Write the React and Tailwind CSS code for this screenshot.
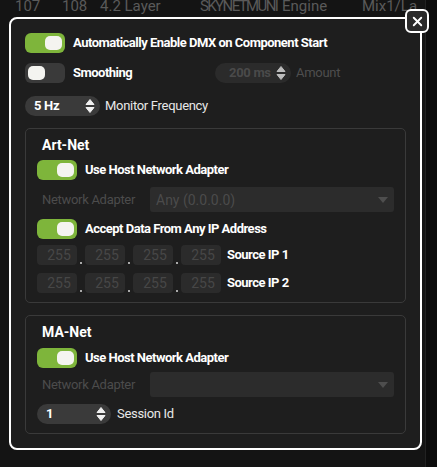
import { X } from 'lucide-react';

const Toggle = ({ on }) => (
    <div className={on ? 'w-[40px] h-[20px] rounded-[6px] bg-[#7eb53b] flex items-center justify-end px-[3px] shrink-0' : 'w-[40px] h-[20px] rounded-[6px] bg-[#3a3a3a] flex items-center justify-start px-[3px] shrink-0'}>
        <div className="w-[17px] h-[14px] rounded-[5px] bg-[#f4f4f0]" />
    </div>
);

const Arrows = ({ color }) => (
    <svg width="10" height="16" viewBox="0 0 10 16" className="shrink-0">
        <path d="M5 1.5 L9 6.5 H1 Z" fill={color} stroke={color} strokeWidth="1" strokeLinejoin="round" />
        <path d="M5 14.5 L9 9.5 H1 Z" fill={color} stroke={color} strokeWidth="1" strokeLinejoin="round" />
    </svg>
);

const Spinner = ({ value, width, disabled }) => (
    <div
        className={disabled ? 'h-[20px] rounded-full bg-[#2b2b2b] flex items-center justify-between pl-[14px] pr-[5px] shrink-0' : 'h-[20px] rounded-full bg-[#3a3a3a] flex items-center justify-between pl-[9px] pr-[5px] shrink-0'}
        style={{ width }}
    >
        <span className={disabled ? 'text-[13px] leading-[16px] font-bold text-[#4a4a4a] tracking-[-0.3px]' : 'text-[13px] leading-[16px] font-bold text-white tracking-[-0.3px]'}>{value}</span>
        <Arrows color={disabled ? '#bdbdbd' : '#f0f0f0'} />
    </div>
);

const Label = ({ children, bold, className = '' }) => (
    <span className={bold ? `text-[13px] leading-[16px] font-bold text-white tracking-[-0.5px] ${className}` : `text-[13px] leading-[16px] text-[#e8e8e8] tracking-[-0.3px] ${className}`}>{children}</span>
);

const AdapterLabel = () => (
    <span className="w-[113px] pl-[5px] text-[13px] leading-[16px] tracking-[-0.3px] text-[#4c4c4c] shrink-0">Network Adapter</span>
);

const Caret = () => (
    <svg width="10" height="6" viewBox="0 0 10 6">
        <path d="M0 0 H10 L5 6 Z" fill="#4e4e4e" />
    </svg>
);

const IpBox = () => (
    <div className="w-[40px] h-[20px] rounded-[4px] bg-[#2b2b2b] flex items-center justify-center pl-[4px]">
        <span className="text-[14px] leading-[16px] text-[#474747]">255</span>
    </div>
);

const Dot = () => (
    <div className="w-[8px] h-[20px] flex items-end justify-center pb-[1px]">
        <div className="w-[2px] h-[2px] rounded-full bg-[#d8d8d8]" />
    </div>
);

const IpRow = ({ label, className }) => (
    <div className={`flex items-center h-[20px] ${className}`}>
        <IpBox />
        <Dot />
        <IpBox />
        <Dot />
        <IpBox />
        <Dot />
        <IpBox />
        <Label bold className="ml-[6px]">{label}</Label>
    </div>
);

const App = () => {
    return (
        <div className="w-[437px] h-[467px] bg-[#141414] relative overflow-hidden" style={{ fontFamily: 'Roboto, "Noto Sans", sans-serif' }}>
            {/* Background table (cut off behind the dialog) */}
            <div className="flex h-[14px] items-end text-[15px] text-[#5a5a5a] leading-none overflow-hidden whitespace-nowrap">
                <span className="ml-[15px] w-[47px]">107</span>
                <span className="w-[38px]">108</span>
                <span className="w-[100px]">4.2 Layer</span>
                <span className="w-[82px] pr-[10px] overflow-hidden tracking-[-1.6px]">SKYNETMUNI</span>
                <span className="w-[80px]">Engine</span>
                <span>Mix1/La</span>
            </div>
            <div className="absolute right-0 top-0 w-[12px] h-full bg-[#0c0c0c] border-l border-[#222]" />

            {/* Dialog */}
            <div className="absolute left-[9px] top-[17px] w-[413px] h-[433px] rounded-[8px] border-2 border-white bg-[#1e1e1e] pt-[14px] px-[14px]">
                <div className="flex items-center gap-[8px] h-[20px]">
                    <Toggle on />
                    <Label bold>Automatically Enable DMX on Component Start</Label>
                </div>
                <div className="flex items-center h-[20px] mt-[10px]">
                    <Toggle />
                    <Label bold className="ml-[8px] w-[142px]">Smoothing</Label>
                    <Spinner value="200 ms" width={76} disabled />
                    <span className="ml-[5px] text-[13px] leading-[16px] tracking-[-0.3px] text-[#4e4e4e]">Amount</span>
                </div>
                <div className="flex items-center gap-[5px] h-[20px] mt-[13px]">
                    <Spinner value="5 Hz" width={75} />
                    <Label>Monitor Frequency</Label>
                </div>

                {/* Art-Net */}
                <div className="mt-[12px] border border-[#3a3a3a] rounded-[5px] px-[11px] pt-[6px] pb-[9px]">
                    <div className="pl-[5px] h-[20px] text-[14px] font-bold text-white leading-[20px]">Art-Net</div>
                    <div className="flex items-center gap-[8px] h-[20px] mt-[5px]">
                        <Toggle on />
                        <Label bold>Use Host Network Adapter</Label>
                    </div>
                    <div className="flex items-center h-[25px] mt-[7px]">
                        <AdapterLabel />
                        <div className="flex-1 h-[25px] rounded-[3px] bg-[#2c2c2c] flex items-center justify-between pl-[6px] pr-[6px]">
                            <span className="text-[14px] leading-[16px] text-[#4b4b4b]">Any (0.0.0.0)</span>
                            <Caret />
                        </div>
                    </div>
                    <div className="flex items-center gap-[8px] h-[20px] mt-[7px]">
                        <Toggle on />
                        <Label bold>Accept Data From Any IP Address</Label>
                    </div>
                    <IpRow label="Source IP 1" className="mt-[6px]" />
                    <IpRow label="Source IP 2" className="mt-[8px]" />
                </div>

                {/* MA-Net */}
                <div className="mt-[12px] border border-[#3a3a3a] rounded-[5px] px-[11px] pt-[6px] pb-[9px]">
                    <div className="pl-[5px] h-[20px] text-[14px] font-bold text-white leading-[20px]">MA-Net</div>
                    <div className="flex items-center gap-[8px] h-[20px] mt-[6px]">
                        <Toggle on />
                        <Label bold>Use Host Network Adapter</Label>
                    </div>
                    <div className="flex items-center h-[25px] mt-[4px]">
                        <AdapterLabel />
                        <div className="flex-1 h-[25px] rounded-[3px] bg-[#2c2c2c] flex items-center justify-end pr-[6px]">
                            <Caret />
                        </div>
                    </div>
                    <div className="flex items-center gap-[6px] h-[20px] mt-[7px]">
                        <Spinner value="1" width={74} />
                        <Label>Session Id</Label>
                    </div>
                </div>
            </div>

            {/* Close button */}
            <div className="absolute left-[405px] top-[9px] w-[24px] h-[24px] rounded-[6px] border-2 border-white bg-[#2a2a2a] flex items-center justify-center">
                <X size={15} strokeWidth={3} className="text-white" />
            </div>
        </div>
    );
};

export default App;
